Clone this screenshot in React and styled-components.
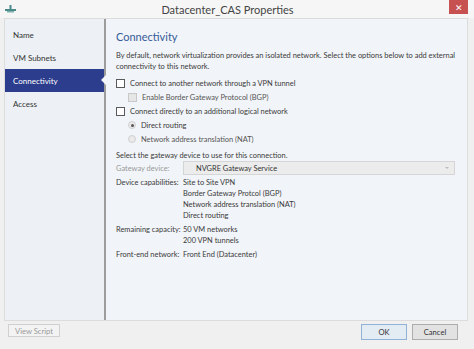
import React from "react";
import styled, { createGlobalStyle } from "styled-components";

const GlobalStyle = createGlobalStyle`
  html, body {
    margin: 0;
    padding: 0;
    background: #f0f0f0;
  }
  * { box-sizing: border-box; }
`;

const Window = styled.div`
  width: 474px;
  height: 349px;
  background: #f0f0f0;
  font-family: Lato, "Open Sans", sans-serif;
  color: #3a3a3a;
  display: flex;
  flex-direction: column;
  overflow: hidden;
`;

const TitleBar = styled.div`
  height: 18px;
  display: flex;
  align-items: center;
  background: #f6f6f6;
`;

const AppIcon = styled.svg`
  margin-left: 5px;
  width: 11px;
  height: 8px;
`;

const Title = styled.div`
  flex: 1;
  text-align: center;
  font-size: 11px;
  color: #444;
  padding-right: 10px;
`;

const CloseButton = styled.div`
  width: 19px;
  height: 14px;
  margin-right: 6px;
  align-self: flex-start;
  background: #c75050;
  color: #fff;
  font-size: 9px;
  display: flex;
  align-items: center;
  justify-content: center;
`;

const Body = styled.div`
  height: 303px;
  display: flex;
  margin: 0 6px 0 4px;
  border: 1px solid #dcdcdc;
`;

const Nav = styled.div`
  width: 101px;
  flex-shrink: 0;
  background: #edf1f5;
  border-right: 2px solid #9c9c9c;
  padding-top: 4px;
`;

const NavItem = styled.div`
  position: relative;
  height: 23px;
  display: flex;
  align-items: center;
  padding-left: 8px;
  font-size: 8px;
  color: ${(p) => (p.$active ? "#fff" : "#333")};
  background: ${(p) => (p.$active ? "#2c3d8e" : "transparent")};

  ${(p) =>
    p.$active &&
    `
    &::after {
      content: "";
      position: absolute;
      right: -2px;
      top: 6px;
      border-top: 5px solid transparent;
      border-bottom: 5px solid transparent;
      border-right: 5px solid #f1f4f8;
    }
  `}
`;

const Content = styled.div`
  flex: 1;
  min-width: 0;
  background: #f1f4f8;
  padding: 10px 10px 0 10px;
  font-size: 7.45px;
  line-height: 11px;
  white-space: nowrap;
`;

const Heading = styled.div`
  font-size: 11px;
  line-height: 16px;
  color: #365c9a;
  margin-bottom: 5px;
`;

const Paragraph = styled.div`
  margin-bottom: 4px;
`;

const OptionRow = styled.div`
  display: flex;
  align-items: center;
  height: 14px;
  padding-left: ${(p) => (p.$indent ? 12 : 0)}px;
  color: ${(p) => (p.$muted ? "#555" : "#3a3a3a")};
  gap: 5px;
`;

const CheckBox = styled.span`
  width: 9px;
  height: 9px;
  border: 1px solid ${(p) => (p.$disabled ? "#c8c8c8" : "#5a5a5a")};
  background: ${(p) => (p.$disabled ? "#e6e6e6" : "#fff")};
  flex-shrink: 0;
`;

const Radio = styled.span`
  width: 8px;
  height: 8px;
  border-radius: 50%;
  border: 1px solid #d0d0d0;
  background: #eaeaea;
  flex-shrink: 0;
  display: flex;
  align-items: center;
  justify-content: center;

  &::after {
    content: "";
    width: 3px;
    height: 3px;
    border-radius: 50%;
    background: ${(p) => (p.$checked ? "#555" : "transparent")};
  }
`;

const Note = styled.div`
  margin-top: 4px;
`;

const GatewayRow = styled.div`
  display: flex;
  align-items: center;
  margin-bottom: 2px;
`;

const FieldLabel = styled.div`
  width: 67px;
  flex-shrink: 0;
  color: ${(p) => (p.$muted ? "#999" : "#3a3a3a")};
`;

const Select = styled.div`
  flex: 1;
  height: 14px;
  margin-right: 2px;
  border: 1px solid #d5d5d5;
  background: #ececec;
  display: flex;
  align-items: center;
  padding-left: 12px;
  color: #333;
  position: relative;

  &::after {
    content: "";
    position: absolute;
    right: 5px;
    top: 5px;
    border-left: 2px solid transparent;
    border-right: 2px solid transparent;
    border-top: 2px solid #bbb;
  }
`;

const InfoRow = styled.div`
  display: flex;
  margin-bottom: 3px;
`;

const InfoValues = styled.div`
  display: flex;
  flex-direction: column;
`;

const Footer = styled.div`
  flex: 1;
  display: flex;
  align-items: flex-start;
  padding: 3px 16px 0 8px;
  gap: 5px;
`;

const Button = styled.div`
  height: ${(p) => (p.$disabled ? 13 : 16)}px;
  min-width: ${(p) => (p.$disabled ? 47 : 46)}px;
  padding: 0 6px;
  display: flex;
  align-items: center;
  justify-content: center;
  font-size: 7.6px;
  color: ${(p) => (p.$disabled ? "#999" : "#333")};
  background: ${(p) =>
    p.$primary ? "#e3ebf3" : p.$disabled ? "#f3f3f3" : "#e2e2e2"};
  border: 1px solid
    ${(p) => (p.$primary ? "#8fb2d8" : p.$disabled ? "#d0d0d0" : "#adadad")};
`;

const Spacer = styled.div`
  flex: 1;
`;

const navItems = ["Name", "VM Subnets", "Connectivity", "Access"];

export default function App() {
  return (
    <Window>
      <GlobalStyle />
      <TitleBar>
        <AppIcon viewBox="0 0 11 8">
          <rect x="4.5" y="0" width="2" height="5" fill="#4a8a8a" />
          <rect x="0" y="4" width="11" height="2" fill="#4a8a8a" />
          <rect x="2" y="6" width="7" height="1.5" fill="#7fb0b0" />
        </AppIcon>
        <Title>Datacenter_CAS Properties</Title>
        <CloseButton>✕</CloseButton>
      </TitleBar>

      <Body>
        <Nav>
          {navItems.map((item) => (
            <NavItem key={item} $active={item === "Connectivity"}>
              {item}
            </NavItem>
          ))}
        </Nav>

        <Content>
          <Heading>Connectivity</Heading>
          <Paragraph>
            By default, network virtualization provides an isolated network. Select the options below to add external
            <br />
            connectivity to this network.
          </Paragraph>

          <OptionRow>
            <CheckBox />
            Connect to another network through a VPN tunnel
          </OptionRow>
          <OptionRow $indent $muted>
            <CheckBox $disabled />
            Enable Border Gateway Protocol (BGP)
          </OptionRow>
          <OptionRow>
            <CheckBox />
            Connect directly to an additional logical network
          </OptionRow>
          <OptionRow $indent>
            <Radio $checked />
            Direct routing
          </OptionRow>
          <OptionRow $indent $muted>
            <Radio />
            Network address translation (NAT)
          </OptionRow>

          <Note>Select the gateway device to use for this connection.</Note>
          <GatewayRow>
            <FieldLabel $muted>Gateway device:</FieldLabel>
            <Select>NVGRE Gateway Service</Select>
          </GatewayRow>

          <InfoRow>
            <FieldLabel>Device capabilities:</FieldLabel>
            <InfoValues>
              <span>Site to Site VPN</span>
              <span>Border Gateway Protcol (BGP)</span>
              <span>Network address translation (NAT)</span>
              <span>Direct routing</span>
            </InfoValues>
          </InfoRow>
          <InfoRow>
            <FieldLabel>Remaining capacity:</FieldLabel>
            <InfoValues>
              <span>50 VM networks</span>
              <span>200 VPN tunnels</span>
            </InfoValues>
          </InfoRow>
          <InfoRow>
            <FieldLabel>Front-end network:</FieldLabel>
            <InfoValues>
              <span>Front End (Datacenter)</span>
            </InfoValues>
          </InfoRow>
        </Content>
      </Body>

      <Footer>
        <Button $disabled>View Script</Button>
        <Spacer />
        <Button $primary>OK</Button>
        <Button>Cancel</Button>
      </Footer>
    </Window>
  );
}
